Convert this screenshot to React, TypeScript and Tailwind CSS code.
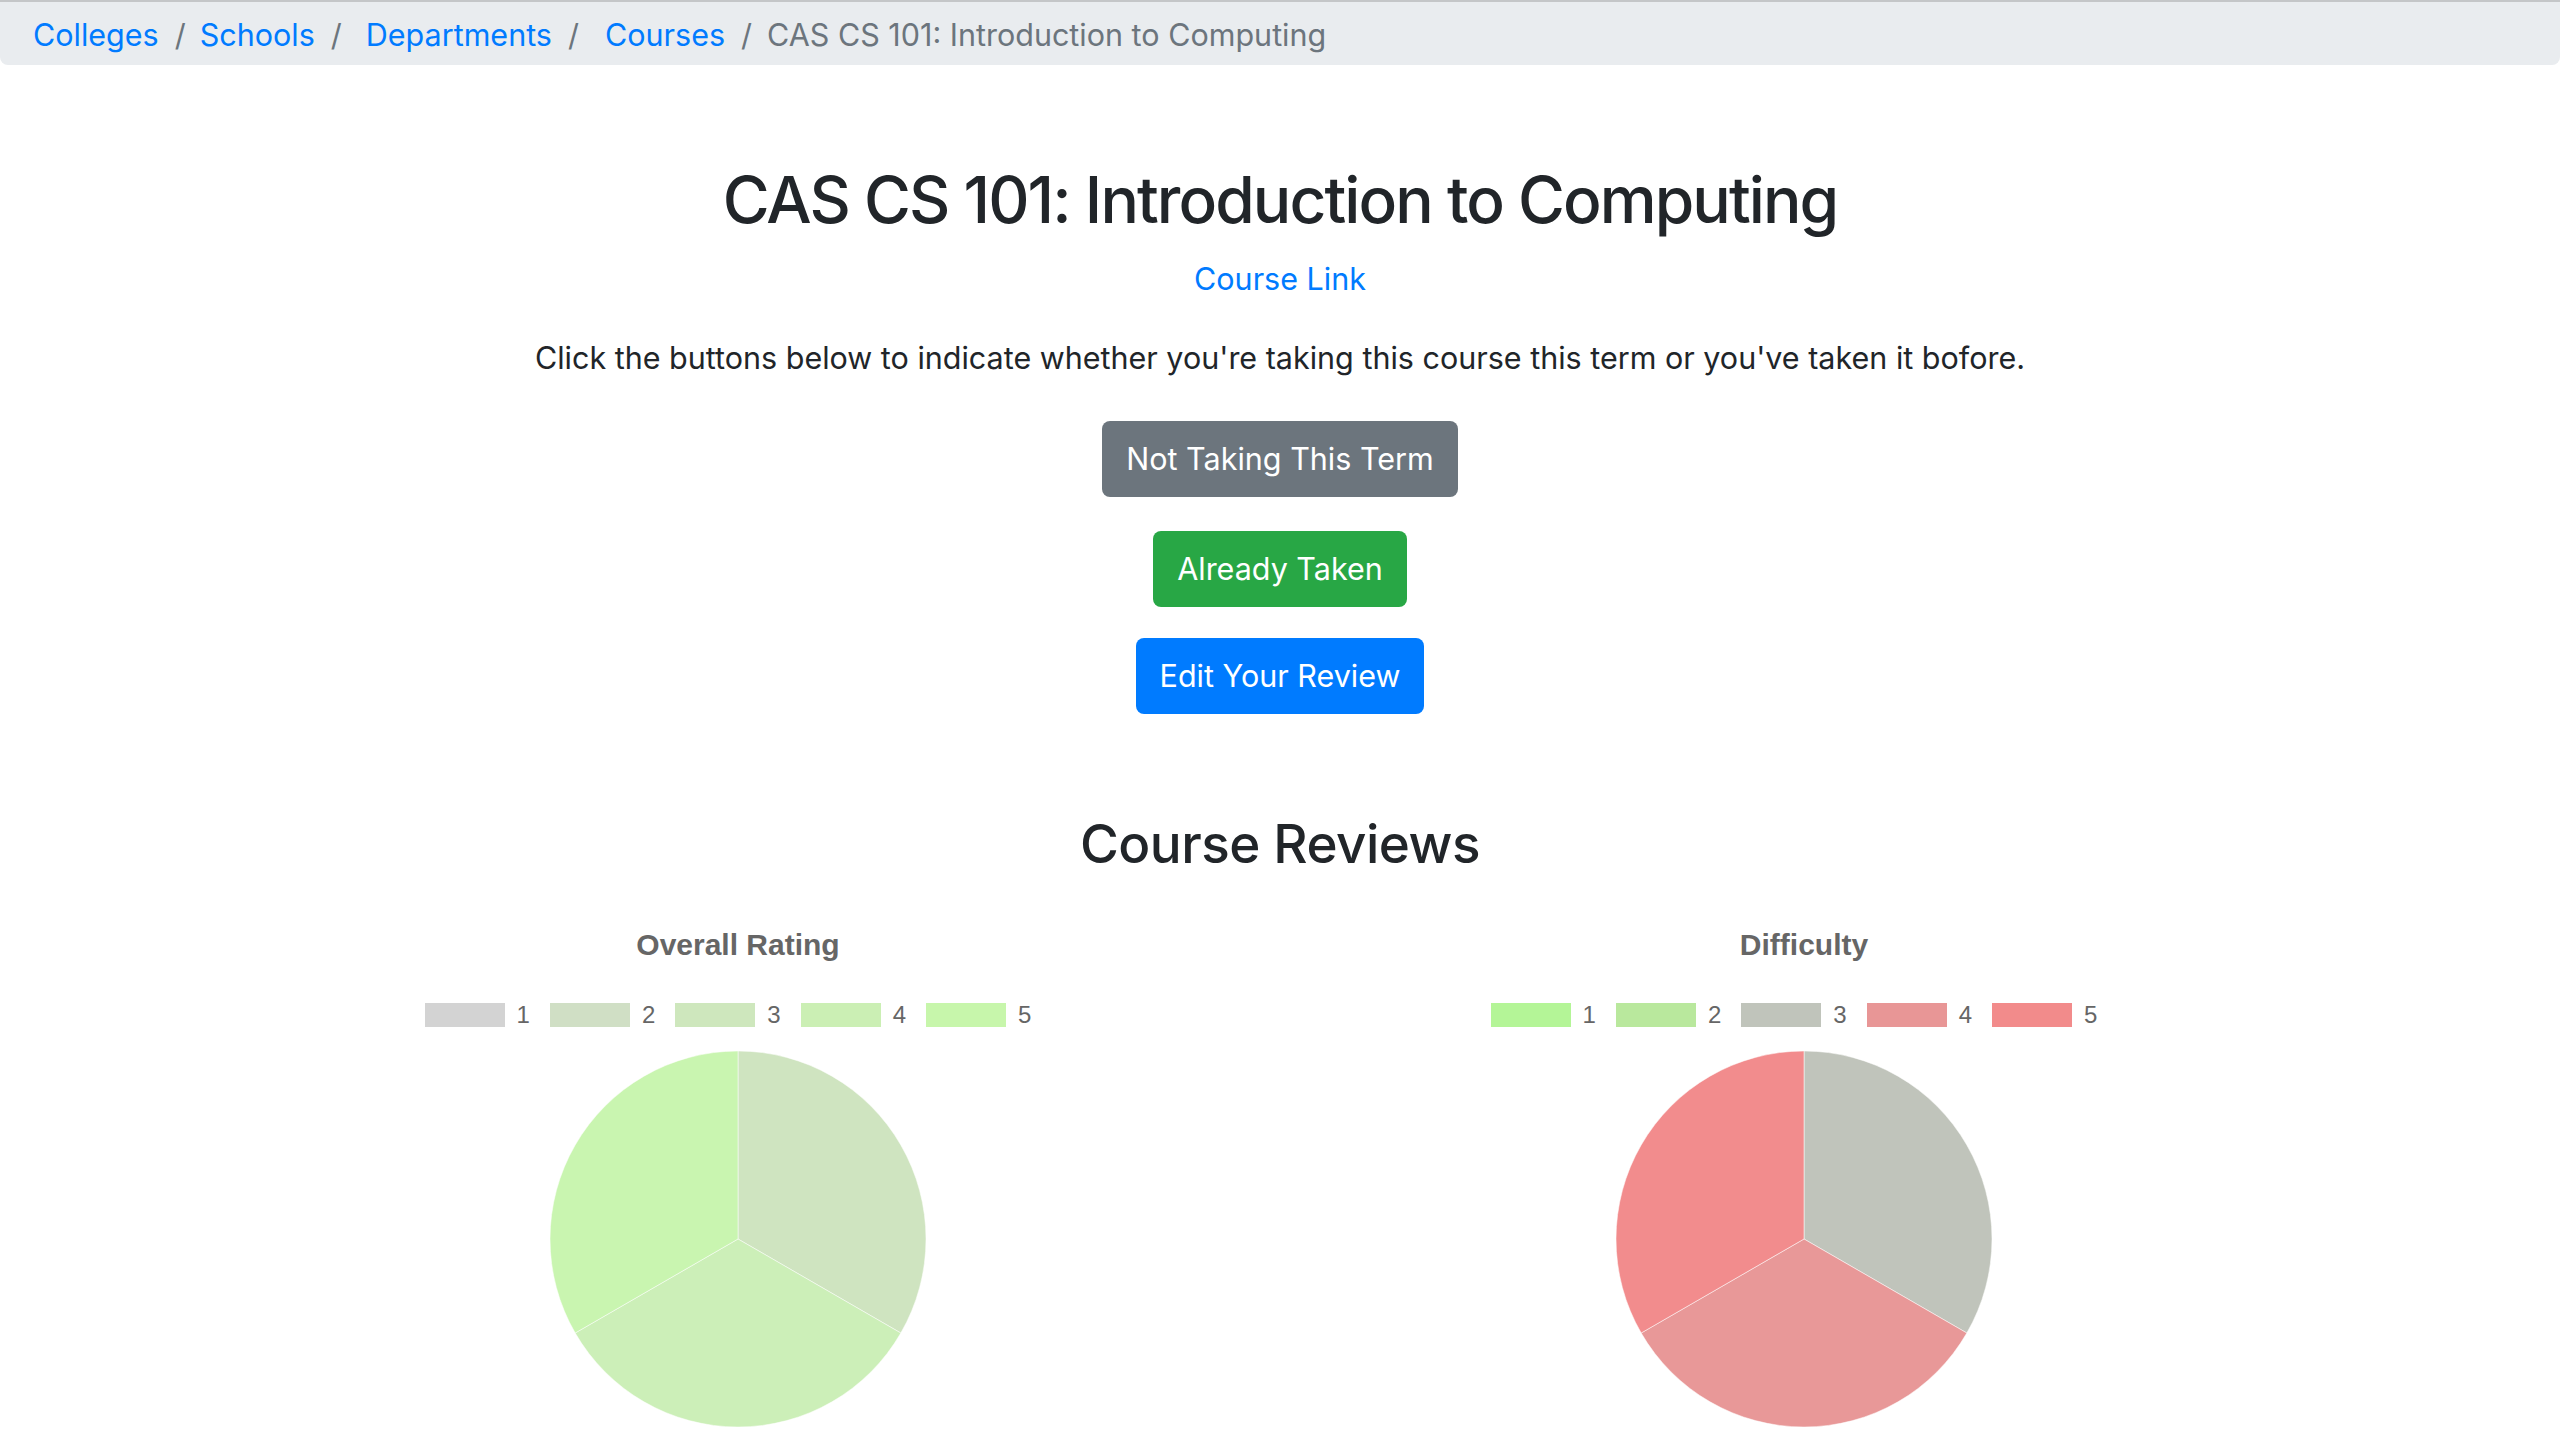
import React from 'react';

const crumbs = [
  { label: 'Colleges', gap: 'ml-0' },
  { label: 'Schools', gap: 'ml-[14px]' },
  { label: 'Departments', gap: 'ml-[24px]' },
  { label: 'Courses', gap: 'ml-[26px]' },
];

interface PieChartProps {
  title: string;
  legend: string[];
  slices: string[];
}

const R = 188;
const pt = (deg: number) => {
  const a = (deg * Math.PI) / 180;
  return `${(R + R * Math.cos(a)).toFixed(2)},${(R + R * Math.sin(a)).toFixed(2)}`;
};

const PieChart: React.FC<PieChartProps> = ({ title, legend, slices }) => {
  const angles = [-90, 30, 150, 270];
  return (
    <div className="flex flex-col items-center font-['Liberation_Sans',Arial,sans-serif] text-[#666]">
      <div className="text-[30px] leading-[40px] font-bold">{title}</div>
      {/* chart.js pads after every item, last one too */}
      <div className="mt-[38px] flex items-center h-[24px]">
        {legend.map((c, i) => (
          <div key={i} className="flex items-center mr-[20px]">
            <span className="w-[80px] h-[24px]" style={{ backgroundColor: c }} />
            <span className="ml-[12px] text-[24px] leading-[24px]">{i + 1}</span>
          </div>
        ))}
      </div>
      <svg className="mt-[24px]" width={R * 2} height={R * 2} viewBox={`0 0 ${R * 2} ${R * 2}`}>
        {slices.map((c, i) => (
          <path
            key={i}
            d={`M${R},${R} L${pt(angles[i])} A${R},${R} 0 0 1 ${pt(angles[i + 1])} Z`}
            fill={c}
            stroke="#ffffff"
            strokeOpacity={0.5}
            strokeWidth={1}
          />
        ))}
      </svg>
    </div>
  );
};

const App: React.FC = () => {
  return (
    <div className="min-h-screen bg-white font-['Inter',sans-serif] text-[#212529]">
      <nav className="h-[65px] pt-[2px] bg-[#e9ecef] border-t-2 border-[#c4c6c8] rounded-b-[8px] flex items-center px-[33px] text-[30.5px]">
        {crumbs.map((c) => (
          <React.Fragment key={c.label}>
            <a className={`${c.gap} text-[#007bff]`}>{c.label}</a>
            <span className="ml-[16px] text-[#6c757d]">/</span>
          </React.Fragment>
        ))}
        <span className="ml-[15px] text-[#6c757d]">CAS CS 101: Introduction to Computing</span>
      </nav>

      <main className="flex flex-col items-center">
        <h1 className="mt-[85px] text-[64px] leading-[100px] font-medium tracking-[-0.03em]">
          CAS CS 101: Introduction to Computing
        </h1>
        <a className="mt-[5px] text-[30.5px] leading-[48px] text-[#007bff]">Course Link</a>
        <p className="mt-[31px] text-[30.5px] leading-[48px]">
          Click the buttons below to indicate whether you're taking this course this term or you've taken it bofore.
        </p>

        <button className="mt-[39px] h-[76px] px-[24px] rounded-[8px] bg-[#6c757d] text-white text-[30.5px]">
          Not Taking This Term
        </button>
        <button className="mt-[34px] h-[76px] px-[24px] rounded-[8px] bg-[#28a745] text-white text-[30.5px]">
          Already Taken
        </button>
        <button className="mt-[31px] h-[76px] px-[24px] rounded-[8px] bg-[#007bff] text-white text-[30.5px]">
          Edit Your Review
        </button>

        <h2 className="mt-[90px] text-[53px] leading-[80px] font-medium tracking-[-0.01em]">Course Reviews</h2>

        <div className="mt-[41px] w-full flex justify-center pr-[18px]">
          <div className="grid grid-cols-2 w-[2132px]">
            <PieChart
              title="Overall Rating"
              legend={['#d3d3d3', '#d0dfc5', '#cee7bd', '#cbefb4', '#c7f6ab']}
              slices={['#cfe4c0', '#ccefb8', '#c9f5b0']}
            />
            <PieChart
              title="Difficulty"
              legend={['#b4f597', '#b9e89d', '#c0c4bb', '#e89696', '#f28b8b']}
              slices={['#c0c4bb', '#e89898', '#f28c8d']}
            />
          </div>
        </div>
      </main>
    </div>
  );
};

export default App;
